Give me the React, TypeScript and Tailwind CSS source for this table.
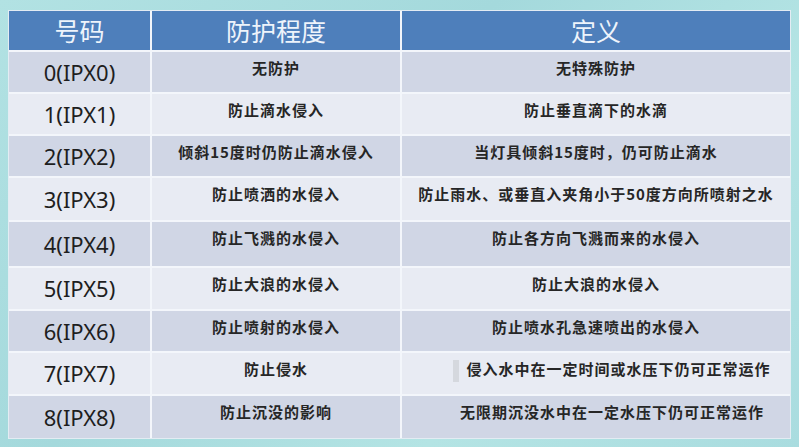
const rows = [
  { code: "0(IPX0)", level: "无防护", def: "无特殊防护", h: "h-[40px]" },
  { code: "1(IPX1)", level: "防止滴水侵入", def: "防止垂直滴下的水滴", h: "h-[40px]" },
  { code: "2(IPX2)", level: "倾斜15度时仍防止滴水侵入", def: "当灯具倾斜15度时，仍可防止滴水", h: "h-[40px]" },
  { code: "3(IPX3)", level: "防止喷洒的水侵入", def: "防止雨水、或垂直入夹角小于50度方向所喷射之水", h: "h-[42px]" },
  { code: "4(IPX4)", level: "防止飞溅的水侵入", def: "防止各方向飞溅而来的水侵入", h: "h-[44px]" },
  { code: "5(IPX5)", level: "防止大浪的水侵入", def: "防止大浪的水侵入", h: "h-[41px]" },
  { code: "6(IPX6)", level: "防止喷射的水侵入", def: "防止喷水孔急速喷出的水侵入", h: "h-[40px]" },
  { code: "7(IPX7)", level: "防止侵水", def: "侵入水中在一定时间或水压下仍可正常运作", h: "h-[41px]", shift: true, mark: true },
  { code: "8(IPX8)", level: "防止沉没的影响", def: "无限期沉没水中在一定水压下仍可正常运作", h: "h-[42px]", shift: true },
];

const cjk = "font-['Noto_Sans_CJK_SC','Noto_Sans',sans-serif]";

export default function App() {
  return (
    <div className="w-[799px] h-[447px] bg-[linear-gradient(135deg,#b2e2e3_0%,#a4d9dc_40%,#b4e4e4_70%,#a9dcdf_100%)] pl-[9px] pt-[11px] overflow-hidden">
      <div className="w-[781px] flex flex-col gap-[2px] bg-[#f3f6fb] shadow-[0_0_0_1px_#e3ecf3]">
        <div className="grid grid-cols-[141px_248px_388px] gap-[2px] h-[39px]">
          {["号码", "防护程度", "定义"].map((t) => (
            <div key={t} className={`bg-[#4e7fbb] flex items-center justify-center text-[25px] leading-none text-[#eef4fb] ${cjk}`}>
              {t}
            </div>
          ))}
        </div>
        {rows.map((r, i) => {
          const bg = i % 2 === 0 ? "bg-[#d0d6e5]" : "bg-[#e8ebf3]";
          return (
            <div key={r.code} className={`grid grid-cols-[141px_248px_388px] gap-[2px] ${r.h}`}>
              <div className={`${bg} flex items-center justify-center font-['Noto_Sans',sans-serif] text-[22px] text-[#1e1e1e]`}>
                {r.code}
              </div>
              <div className={`${bg} flex justify-center pt-[5px] text-[15px] leading-[22px] font-bold tracking-[1px] text-[#262626] ${cjk}`}>
                {r.level}
              </div>
              <div className={`${bg} flex justify-center pt-[5px] text-[15px] leading-[22px] font-bold tracking-[1px] text-[#262626] ${cjk} ${r.shift ? "pl-[32px]" : ""}`}>
                {r.mark && <span className="w-[6px] h-[22px] bg-[#d5d8de] mr-[7px] mt-[2px]" />}
                <span>{r.def}</span>
              </div>
            </div>
          );
        })}
      </div>
    </div>
  );
}
